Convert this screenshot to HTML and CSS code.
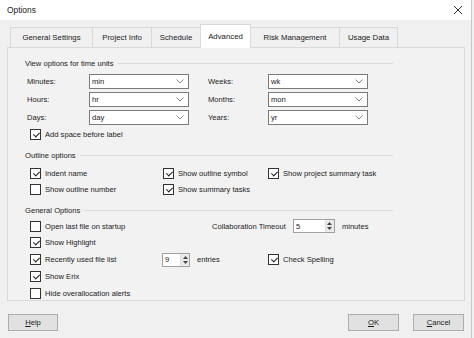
FILE: index.html
```html
<!DOCTYPE html>
<html>
<head>
<meta charset="utf-8">
<link rel="stylesheet" href="styles.css">
</head>
<body>
<div class="window">
  <div class="titlebar">
    <span class="title">Options</span>
    <svg class="close" width="10" height="10" viewBox="0 0 10 10"><path d="M1 1L9 9M9 1L1 9" stroke="#333" stroke-width="1" fill="none"/></svg>
  </div>
  <div class="content">
    <div class="tabs">
      <div class="tab w84">General Settings</div>
      <div class="tab w59">Project Info</div>
      <div class="tab w49">Schedule</div>
      <div class="tab sel w52">Advanced</div>
      <div class="tab w88">Risk Management</div>
      <div class="tab w59">Usage Data</div>
    </div>
    <div class="panel">
      <div class="group g1">
        <div class="ghead"><span>View options for time units</span><i></i></div>
        <div class="grid1">
          <span class="lbl">Minutes:</span>
          <div class="combo"><span>min</span><svg class="chev" width="8" height="5" viewBox="0 0 8 5"><path d="M0.5 0.5L4 4L7.5 0.5" stroke="#888" fill="none"/></svg></div>
          <span class="lbl">Weeks:</span>
          <div class="combo"><span>wk</span><svg class="chev" width="8" height="5" viewBox="0 0 8 5"><path d="M0.5 0.5L4 4L7.5 0.5" stroke="#888" fill="none"/></svg></div>
          <span class="lbl">Hours:</span>
          <div class="combo"><span>hr</span><svg class="chev" width="8" height="5" viewBox="0 0 8 5"><path d="M0.5 0.5L4 4L7.5 0.5" stroke="#888" fill="none"/></svg></div>
          <span class="lbl">Months:</span>
          <div class="combo"><span>mon</span><svg class="chev" width="8" height="5" viewBox="0 0 8 5"><path d="M0.5 0.5L4 4L7.5 0.5" stroke="#888" fill="none"/></svg></div>
          <span class="lbl">Days:</span>
          <div class="combo"><span>day</span><svg class="chev" width="8" height="5" viewBox="0 0 8 5"><path d="M0.5 0.5L4 4L7.5 0.5" stroke="#888" fill="none"/></svg></div>
          <span class="lbl">Years:</span>
          <div class="combo"><span>yr</span><svg class="chev" width="8" height="5" viewBox="0 0 8 5"><path d="M0.5 0.5L4 4L7.5 0.5" stroke="#888" fill="none"/></svg></div>
        </div>
        <label class="cb add"><span class="box on"></span>Add space before label</label>
      </div>

      <div class="group g2">
        <div class="ghead"><span>Outline options</span><i></i></div>
        <div class="grid2">
          <label class="cb"><span class="box on"></span>Indent name</label>
          <label class="cb"><span class="box on"></span>Show outline symbol</label>
          <label class="cb"><span class="box on"></span>Show project summary task</label>
          <label class="cb"><span class="box"></span>Show outline number</label>
          <label class="cb"><span class="box on"></span>Show summary tasks</label>
        </div>
      </div>

      <div class="group g3">
        <div class="ghead"><span>General Options</span><i></i></div>
        <div class="grid3">
          <label class="cb c1"><span class="box"></span>Open last file on startup</label>
          <div class="collab"><span>Collaboration Timeout</span><div class="spin w42"><span>5</span><b class="arrows"><svg width="5" height="10" viewBox="0 0 5 10"><path d="M2.5 1L5 4H0Z M2.5 9L5 6H0Z" fill="#444"/></svg></b></div><span class="unit">minutes</span></div>
          <label class="cb c1"><span class="box on"></span>Show Highlight</label>
          <label class="cb c1"><span class="box on"></span>Recently used file list</label>
          <div class="entries"><div class="spin w28"><span>9</span><b class="arrows"><svg width="5" height="10" viewBox="0 0 5 10"><path d="M2.5 1L5 4H0Z M2.5 9L5 6H0Z" fill="#444"/></svg></b></div><span class="unit">entries</span></div>
          <label class="cb c4"><span class="box on"></span>Check Spelling</label>
          <label class="cb c1"><span class="box on"></span>Show Erix</label>
          <label class="cb c1"><span class="box"></span>Hide overallocation alerts</label>
        </div>
      </div>
    </div>
    <div class="buttons">
      <button class="btn"><u>H</u>elp</button>
      <span class="spacer"></span>
      <button class="btn"><u>O</u>K</button>
      <button class="btn"><u>C</u>ancel</button>
    </div>
  </div>
</div>
</body>
</html>
```
FILE: styles.css
```css
* { box-sizing: border-box; }
html, body { margin: 0; padding: 0; }
body {
  width: 474px; height: 338px; overflow: hidden;
  background: #f0f0f0;
  font-family: "Liberation Sans", Arial, sans-serif;
  font-size: 7.6px;
  color: #1a1a1a;
}
.window {
  width: 472px; height: 338px;
  border-right: 1px solid #c8c8c8;
  background: #f0f0f0;
}
.titlebar {
  height: 20px; background: #fff;
  display: flex; align-items: center; justify-content: space-between;
  padding: 0 7px 0 7px;
  font-size: 8.4px;
}
.close { margin-right: 1px; }
.content { padding: 4px 0 0 7px; }
.tabs { display: flex; height: 23px; align-items: flex-end; padding-left: 3px; position: relative; z-index: 1; font-size: 7.8px; }
.tab {
  height: 20px; border: 1px solid #d9d9d9; border-right: none; border-bottom: none;
  background: #f0f0f0;
  display: flex; align-items: center; justify-content: center;
}
.tab:last-child { border-right: 1px solid #d9d9d9; }
.tab.sel { background: #fff; margin-bottom: -1px; height: 24px; border-right: 1px solid #d9d9d9; }
.tab.sel + .tab { border-left: none; }
.w84 { width: 82px; } .w59 { width: 59px; } .w49 { width: 49px; } .w52 { width: 51px; } .w88 { width: 88px; }
.panel {
  width: 458px; height: 254px;
  border: 1px solid #d9d9d9;
  background: #f2f2f2;
  padding: 9px 0 0 17px;
}
.ghead { display: flex; align-items: center; height: 12px; width: 368px; }
.ghead i { flex: 1; border-top: 1px solid #dadada; margin-left: 4px; }
.grid1 {
  display: grid;
  grid-template-columns: 62px 100px 19px 60px 100px;
  grid-auto-rows: 15px; row-gap: 3px;
  margin: 5px 0 0 2px;
  align-items: center;
}
.grid1 .lbl:nth-of-type(2n) { grid-column: 4; }
.combo {
  height: 15px; border: 1px solid #7a7a7a; background: #fff;
  display: flex; align-items: center; justify-content: space-between;
  padding: 0 3px 0 2px;
}
.chev { margin-right: 1px; }
.cb { display: flex; align-items: center; height: 12px; white-space: nowrap; }
.box {
  width: 11px; height: 11px; border: 1px solid #333; background: #fff;
  margin-right: 4px; flex: none; position: relative;
}
.box.on::after {
  content: ""; position: absolute; left: 2px; top: 0px;
  width: 5px; height: 3px;
  border-left: 1.3px solid #222; border-bottom: 1.3px solid #222;
  transform: translate(0.5px, 2px) rotate(-45deg);
}
.add { margin: 3px 0 0 5px; }
.g2 { margin-top: 9px; }
.grid2 {
  display: grid; grid-template-columns: 133px 105px auto;
  grid-auto-rows: 12px; row-gap: 4px;
  margin: 6px 0 0 5px;
}
.g3 { margin-top: 9px; }
.grid3 {
  display: grid; grid-template-columns: 132px 50px 56px auto;
  grid-auto-rows: 12px; row-gap: 4.75px;
  margin: 4px 0 0 5px; align-items: center;
}
.c1 { grid-column: 1; }
.c4 { grid-column: 4; }
.collab { grid-column: 3 / 5; display: flex; align-items: center; white-space: nowrap; }
.collab .spin { margin-left: 7px; }
.entries { grid-column: 2 / 4; display: flex; align-items: center; }
.unit { margin-left: 7px; }
.spin {
  height: 14px; border: 1px solid #a0a0a0; background: #fff;
  display: flex; align-items: center; justify-content: space-between;
  padding-left: 2px;
}
.w42 { width: 42px; } .w28 { width: 28px; }
.arrows { width: 9px; height: 12px; background: #eaeaea; display: flex; align-items: center; justify-content: center; border-left: 1px solid #ddd; }
.buttons { display: flex; margin-top: 13px; padding-right: 8px; width: 465px; gap: 14px; }
.spacer { flex: 1; }
.btn {
  width: 51px; height: 17px; border: 1px solid #adadad; background: #e1e1e1;
  font: inherit; color: #1a1a1a; padding: 0; margin: 0;
}
.btn:first-child { margin-left: 1px; width: 50px; }
```
